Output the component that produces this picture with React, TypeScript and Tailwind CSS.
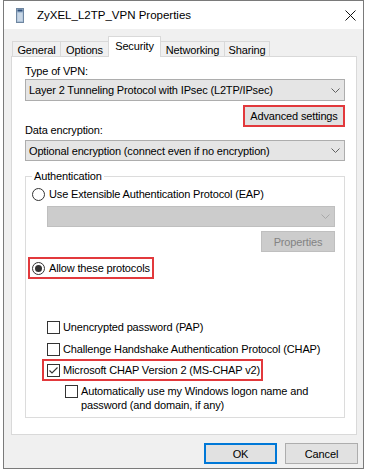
import React from 'react';

const RED = 'border-[#e2393c]';

function Chevron({ color = '#606060' }: { color?: string }) {
  return (
    <svg width="9" height="5" viewBox="0 0 9 5" fill="none" aria-hidden>
      <path d="M0.5 0.5 L4.5 4.5 L8.5 0.5" stroke={color} strokeWidth="1" />
    </svg>
  );
}

function Select({ text, disabled = false, className = '' }: { text?: string; disabled?: boolean; className?: string }) {
  return (
    <div
      className={`flex items-center border pl-[3px] pr-[4px] ${
        disabled ? 'bg-[#cccccc] border-[#bfbfbf]' : 'bg-[#e5e5e5] border-[#adadad]'
      } ${className}`}
    >
      <span className="flex-1 whitespace-nowrap">{text}</span>
      <Chevron color={disabled ? '#a8a8a8' : '#606060'} />
    </div>
  );
}

function Radio({ checked }: { checked: boolean }) {
  return (
    <span className="w-[13px] h-[13px] rounded-full border border-[#333] bg-white flex items-center justify-center shrink-0">
      {checked && <span className="w-[7px] h-[7px] rounded-full bg-[#333]" />}
    </span>
  );
}

function Check({ checked }: { checked: boolean }) {
  return (
    <span className="w-[13px] h-[13px] border border-[#333] bg-white flex items-center justify-center shrink-0">
      {checked && (
        <svg width="11" height="11" viewBox="0 0 11 11" fill="none" aria-hidden>
          <path d="M1.5 5.5 L4 8 L9.5 2.5" stroke="#333" strokeWidth="1.1" />
        </svg>
      )}
    </span>
  );
}

const tabs = [
  { label: 'General', w: 'w-[49px]' },
  { label: 'Options', w: 'w-[49px]' },
  { label: 'Security', w: 'w-[53px]', active: true },
  { label: 'Networking', w: 'w-[65px]' },
  { label: 'Sharing', w: 'w-[46px]' },
];

export default function App() {
  return (
    <div className="w-[373px] h-[476px] bg-white text-[11px] tracking-[-0.15px] text-black font-['Liberation_Sans',Arial,sans-serif] leading-[14px]">
      <div className="ml-[3px] w-[361px] h-[469px] border border-[#7a7a7a] bg-[#f0f0f0] flex flex-col">
        {/* title bar */}
        <div className="h-[28px] bg-white flex items-center pl-[12px] pr-[7px] shrink-0">
          <svg width="8" height="15" viewBox="0 0 8 15" aria-hidden>
            <rect x="0.5" y="0.5" width="7" height="14" fill="#a9bfd6" stroke="#6f86a0" />
            <rect x="1.5" y="1.5" width="5" height="2" fill="#2f4f7a" />
            <path d="M1.5 6 H6.5 M1.5 8 H6.5 M1.5 10 H6.5 M1.5 12 H6.5" stroke="#e8eef5" strokeWidth="1" />
          </svg>
          <span className="ml-[13px] text-[11.5px] tracking-normal">ZyXEL_L2TP_VPN Properties</span>
          <svg className="ml-auto" width="11" height="11" viewBox="0 0 11 11" aria-hidden>
            <path d="M0.5 0.5 L10.5 10.5 M10.5 0.5 L0.5 10.5" stroke="#111" strokeWidth="1" />
          </svg>
        </div>

        {/* tabs */}
        <div className="mt-[7px] h-[21px] flex items-end pl-[8px] shrink-0">
          {tabs.map((t, i) =>
            t.active ? (
              <div
                key={t.label}
                className={`${t.w} h-[21px] ${i ? '-ml-px' : ''} relative z-10 bg-white border-x border-t border-[#d9d9d9] flex justify-center pt-[2px]`}
              >
                {t.label}
              </div>
            ) : (
              <div
                key={t.label}
                className={`${t.w} h-[16px] ${i ? '-ml-px' : ''} bg-[#f0f0f0] border-x border-t border-[#d9d9d9] flex justify-center pt-[1px]`}
              >
                {t.label}
              </div>
            )
          )}
        </div>

        {/* tab panel */}
        <div className="-mt-px ml-[7px] w-[346px] h-[379px] border border-[#d9d9d9] bg-white pl-[13px] pr-[11px] flex flex-col shrink-0">
          <div className="mt-[7px]">Type of VPN:</div>
          <Select className="mt-[1px] h-[22px]" text="Layer 2 Tunneling Protocol with IPsec (L2TP/IPsec)" />
          <div className={`mt-[4px] self-end w-[102px] h-[22px] border-2 ${RED} bg-[#e1e1e1] flex items-center justify-center whitespace-nowrap`}>
            Advanced settings
          </div>
          <div className="-mt-[4px]">Data encryption:</div>
          <Select className="mt-[3px] h-[21px]" text="Optional encryption (connect even if no encryption)" />

          <fieldset className="mt-[8px] border border-[#dcdcdc] pb-[5px]">
            <legend className="ml-[6px] px-[2px]">Authentication</legend>
            <div className="mt-[4px] pl-[6px] flex items-center gap-[4px] h-[14px]">
              <Radio checked={false} />
              <span className="whitespace-nowrap">Use Extensible Authentication Protocol (EAP)</span>
            </div>
            <Select disabled className="mt-[5px] ml-[21px] w-[288px] h-[21px]" />
            <div className="mt-[4px] ml-[235px] w-[74px] h-[21px] border border-[#bfbfbf] bg-[#cccccc] text-[#838383] flex items-center justify-center">
              Properties
            </div>
            <div className={`mt-[5px] ml-[2px] w-[126px] h-[22px] border-2 ${RED} pl-[2px] flex items-center gap-[4px]`}>
              <Radio checked />
              <span className="whitespace-nowrap">Allow these protocols</span>
            </div>

            <div className="mt-[41px] ml-[21px] flex items-center gap-[3px] h-[14px]">
              <Check checked={false} />
              <span className="whitespace-nowrap">Unencrypted password (PAP)</span>
            </div>
            <div className="mt-[8px] ml-[21px] flex items-center gap-[3px] h-[14px]">
              <Check checked={false} />
              <span className="whitespace-nowrap">Challenge Handshake Authentication Protocol (CHAP)</span>
            </div>
            <div className={`mt-[3px] ml-[16px] w-[221px] h-[22px] border-2 ${RED} pl-[3px] flex items-center gap-[3px]`}>
              <Check checked />
              <span className="whitespace-nowrap">Microsoft CHAP Version 2 (MS-CHAP v2)</span>
            </div>
            <div className="mt-[3px] ml-[39px] flex items-start gap-[3px]">
              <span className="mt-px">
                <Check checked={false} />
              </span>
              <span>
                Automatically use my Windows logon name and
                <br />
                password (and domain, if any)
              </span>
            </div>
          </fieldset>
        </div>

        {/* dialog buttons */}
        <div className="mt-[8px] flex justify-end gap-[8px] pr-[5px]">
          <div className="w-[73px] h-[21px] border-2 border-[#0078d7] bg-[#e1e1e1] flex items-center justify-center">OK</div>
          <div className="w-[73px] h-[21px] border border-[#adadad] bg-[#e1e1e1] flex items-center justify-center">Cancel</div>
        </div>
      </div>
    </div>
  );
}
